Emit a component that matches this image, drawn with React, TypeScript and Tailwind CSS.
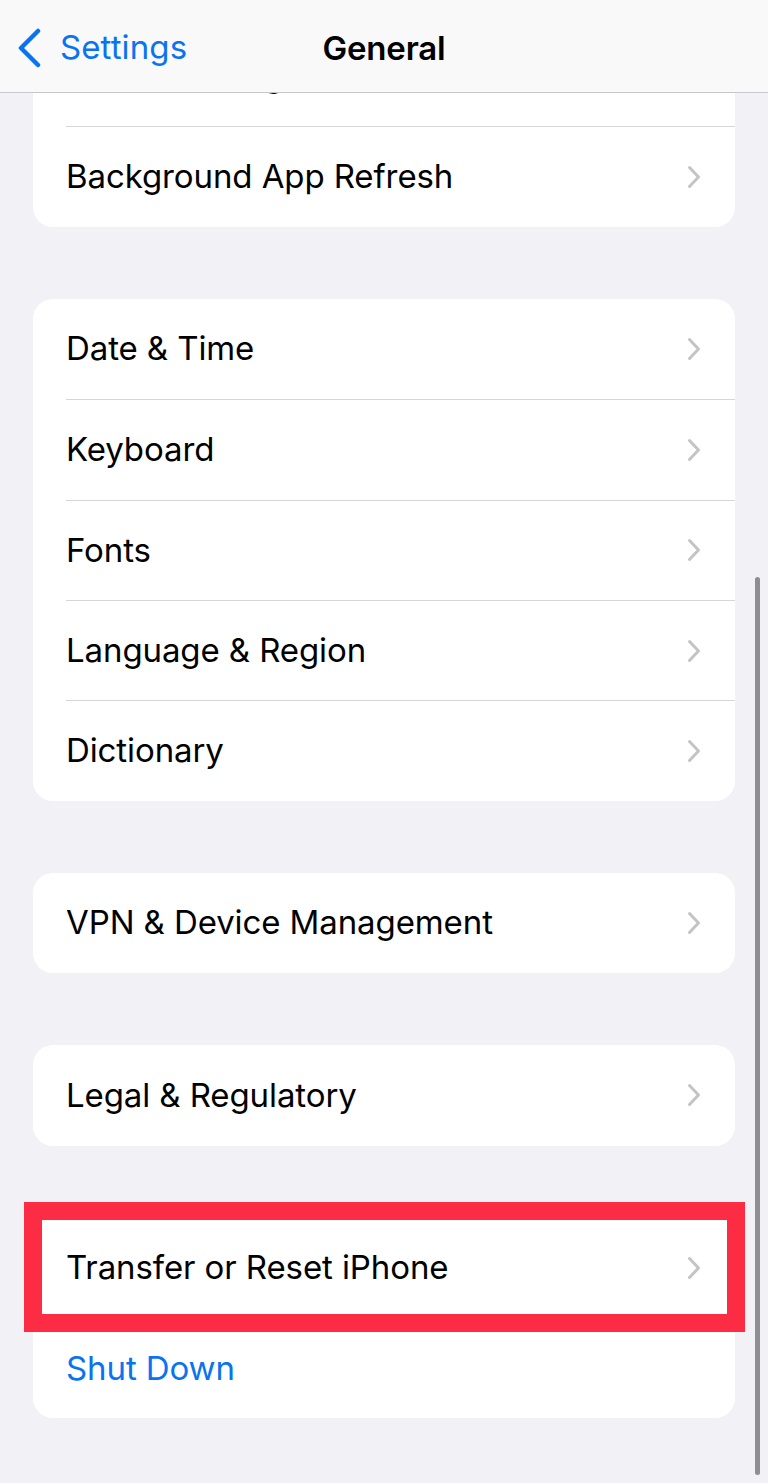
import React from "react";

type Row = { label: string; blue?: boolean; chevron?: boolean; highlight?: boolean };

const groups: Row[][] = [
  [{ label: "iPhone Storage", chevron: true }, { label: "Background App Refresh", chevron: true }],
  [
    { label: "Date & Time", chevron: true },
    { label: "Keyboard", chevron: true },
    { label: "Fonts", chevron: true },
    { label: "Language & Region", chevron: true },
    { label: "Dictionary", chevron: true },
  ],
  [{ label: "VPN & Device Management", chevron: true }],
  [{ label: "Legal & Regulatory", chevron: true }],
  [{ label: "Transfer or Reset iPhone", chevron: true, highlight: true }, { label: "Shut Down", blue: true }],
];

function Chevron() {
  return (
    <svg width="14" height="24" viewBox="0 0 14 24" fill="none" className="shrink-0">
      <path d="M2.5 2.5 L11.5 12 L2.5 21.5" stroke="#c4c4c7" strokeWidth="3" strokeLinecap="round" strokeLinejoin="round" />
    </svg>
  );
}

function SettingsRow({ row, first }: { row: Row; first: boolean }) {
  return (
    <div className="relative h-[100.4px] pl-[33px]">
      <div className={`flex h-full items-center justify-between pr-[34px] ${first ? "" : "border-t border-[#d6d6d9]"}`}>
        <span className={`text-[33px] tracking-[-0.1px] ${row.blue ? "text-[#0a73f0]" : "text-black"}`}>{row.label}</span>
        {row.chevron && <Chevron />}
      </div>
      {row.highlight && (
        <div className="pointer-events-none absolute z-10 -top-[16px] -left-[9px] -right-[10px] -bottom-[14px] border-[18px] border-[#fc2c45]" />
      )}
    </div>
  );
}

export default function App() {
  return (
    <div className="relative h-[1483px] w-[768px] overflow-hidden bg-[#f1f1f6] font-['Inter','Liberation_Sans',sans-serif]">
      <main className="flex flex-col gap-[72px] px-[33px] pt-[26px]">
        {groups.map((g, i) => (
          <section key={i} className="rounded-[20px] bg-white">
            {g.map((r, j) => (
              <SettingsRow key={r.label} row={r} first={j === 0} />
            ))}
          </section>
        ))}
      </main>

      {/* nav bar sits over the scrolled list */}
      <header className="absolute inset-x-0 top-0 z-20 flex h-[93px] items-center border-b border-[#c8c8cc] bg-[#f9f9f9] pt-[4px]">
        <div className="flex items-center pl-[16px] text-[#0a73f0]">
          <svg width="28" height="40" viewBox="0 0 28 40" fill="none">
            <path d="M22 3 L5 20 L22 37" stroke="#0a73f0" strokeWidth="4.5" strokeLinecap="round" strokeLinejoin="round" />
          </svg>
          <span className="ml-[16px] text-[33px] tracking-[0.1px]">Settings</span>
        </div>
        <h1 className="absolute left-1/2 top-[4px] flex h-[89px] -translate-x-1/2 items-center text-[33px] font-semibold tracking-[-0.2px] text-black">
          General
        </h1>
      </header>

      {/* scroll indicator */}
      <div className="absolute right-[8px] top-[577px] z-20 h-[898px] w-[5px] rounded-full bg-[#8e8e93]" />
    </div>
  );
}
